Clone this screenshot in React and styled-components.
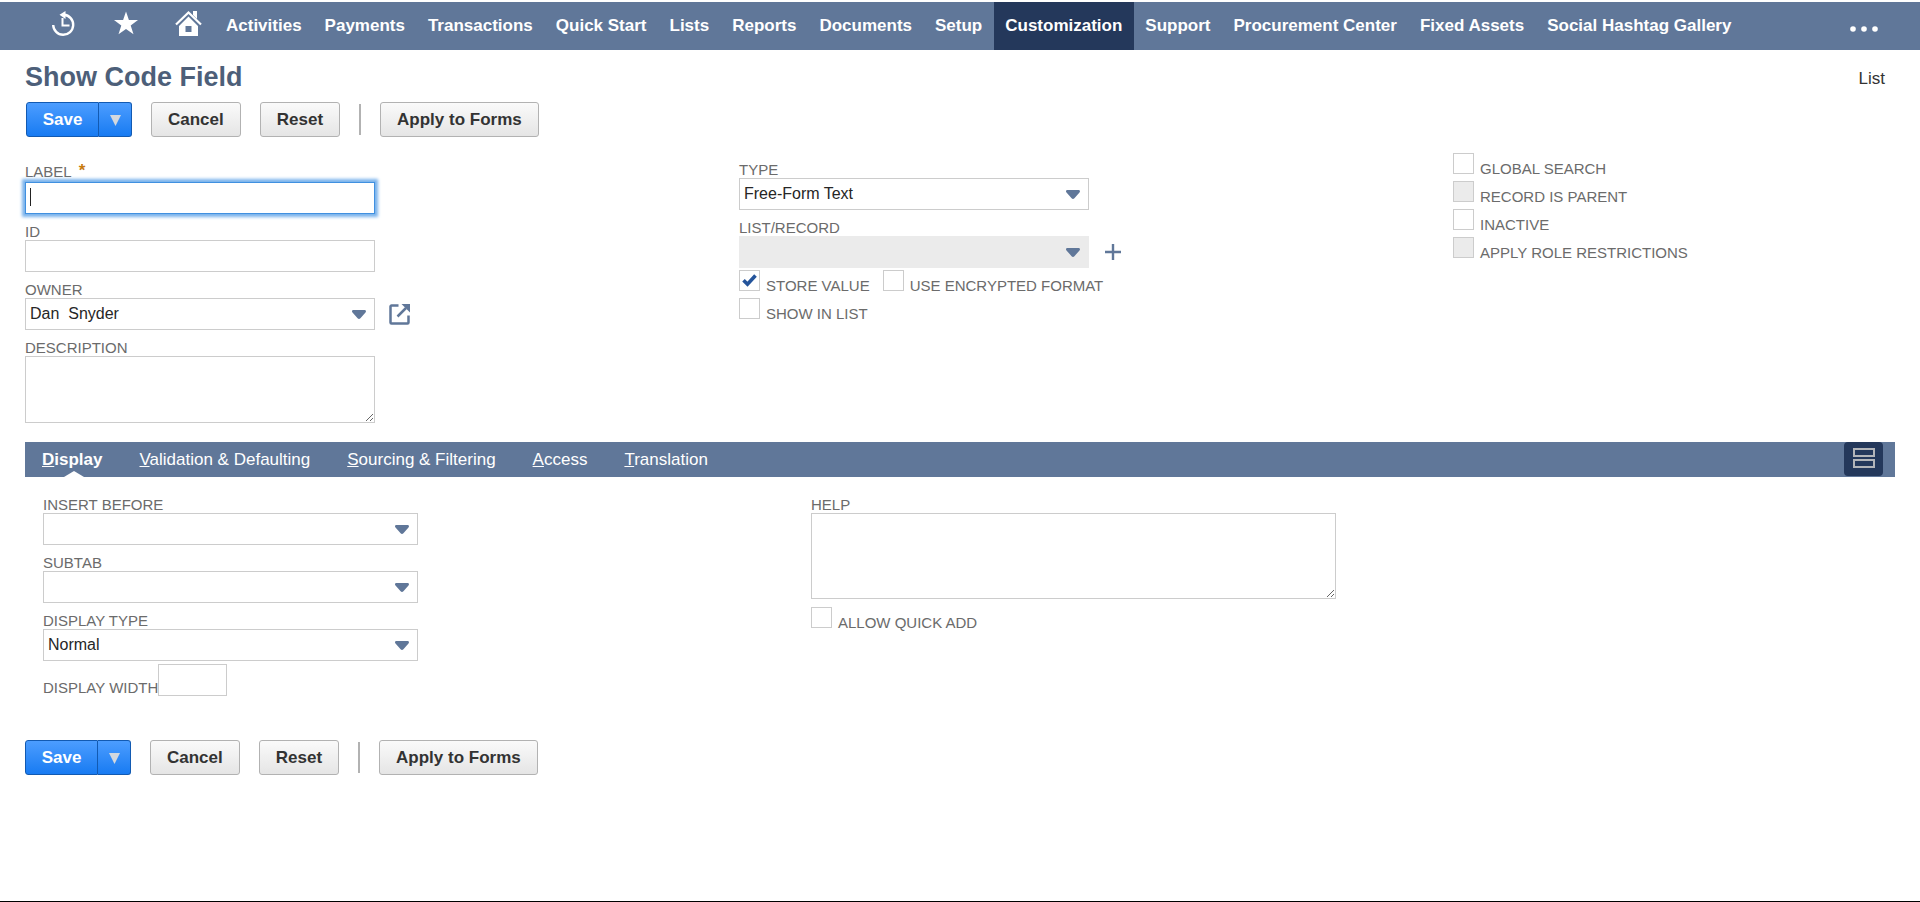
import React from 'react';
import styled, { createGlobalStyle, css } from 'styled-components';

const GlobalStyle = createGlobalStyle`
  *, *::before, *::after { box-sizing: border-box; }
  body {
    margin: 0;
    background: #fff;
    color: #262626;
    font-family: "Liberation Sans", Arial, Helvetica, sans-serif;
    font-size: 16px;
  }
  input, select, textarea, button { font-family: inherit; margin: 0; }
`;

const Page = styled.div`
  display: flex;
  flex-direction: column;
  min-height: 100vh;
  padding-top: 2px;
  border-bottom: 1px solid #000;
`;

const NavBar = styled.nav`
  display: flex;
  align-items: stretch;
  height: 48px;
  padding: 0 42px 0 37px;
  background: #607799;
`;

const NavIcons = styled.div`
  display: flex;
  gap: 8px;
`;

const NavIcon = styled.a`
  display: flex;
  justify-content: center;
  width: 54px;
  padding-top: 9px;
`;

const NavLinks = styled.div`
  display: flex;
  flex: 1;
`;

const NavLink = styled.a`
  padding: 0 12px 0 11px;
  background: ${(p) => (p.$active ? '#24385b' : 'transparent')};
  color: #fff;
  font-size: 17px;
  font-weight: bold;
  line-height: 47px;
  text-decoration: none;
  white-space: nowrap;
`;

const MoreButton = styled.button`
  padding: 5px 0 0;
  border: 0;
  background: none;
  line-height: 0;
`;

const TitleRow = styled.header`
  display: flex;
  justify-content: space-between;
  align-items: center;
  padding: 11px 35px 0 25px;
`;

const Title = styled.h1`
  margin: 0;
  color: #4d5f79;
  font-size: 27px;
  line-height: 32px;
`;

const ListLink = styled.a`
  padding-top: 4px;
  color: #333;
  font-size: 17px;
  line-height: 24px;
  text-decoration: none;
`;

const Toolbar = styled.div`
  display: flex;
  align-items: center;
  gap: 19px;
  padding: ${(p) => (p.$bottom ? '44px 25px 0' : '9px 26px 0')};
`;

const blueFace = css`
  height: 35px;
  border: 1px solid #125ab2;
  background: linear-gradient(#4c9dff, #187bf2);
  color: #fff;
`;

const Split = styled.div`
  display: flex;
`;

const SaveButton = styled.button`
  ${blueFace}
  width: 73px;
  padding: 0;
  border-radius: 3px 0 0 3px;
  font-size: 17px;
  font-weight: bold;
`;

const SaveMenuButton = styled.button`
  ${blueFace}
  display: flex;
  align-items: center;
  justify-content: center;
  width: 33px;
  padding: 2px 0 0;
  border-left: 0;
  border-radius: 0 3px 3px 0;
`;

const Button = styled.button`
  height: 35px;
  padding: 0 16px;
  border: 1px solid #b2b2b2;
  border-radius: 3px;
  background: linear-gradient(#fafafa, #e5e5e5);
  color: #333;
  font-size: 17px;
  font-weight: bold;
`;

const Separator = styled.span`
  width: 2px;
  height: 31px;
  background: #b2b2b2;
`;

const MainFields = styled.section`
  display: grid;
  grid-template-columns: 714fr 714fr 442fr;
  align-items: start;
  padding: 16px 25px 0;
`;

const Column = styled.div`
  display: flex;
  flex-direction: column;
  padding-top: ${(p) => p.$top || 0}px;
`;

const Field = styled.div`
  display: flex;
  flex-direction: column;
  margin-bottom: ${(p) => (p.$tight ? 2 : 8)}px;
`;

const FieldLabel = styled.label`
  padding-top: 2px;
  color: #6b6b6b;
  font-size: 15px;
  line-height: 16px;
`;

const LabelRow = styled.div`
  display: flex;
  gap: 7px;
  padding-bottom: 2px;
`;

const Required = styled.span`
  color: #c77b10;
  font-size: 17px;
  font-weight: bold;
  line-height: 18px;
`;

const ControlRow = styled.div`
  display: flex;
  align-items: center;
  gap: ${(p) => p.$gap || 14}px;
`;

const boxFace = css`
  border: 1px solid #ccc;
  border-radius: 0;
  background: #fff;
  color: #262626;
  font-size: 16px;
  outline: none;
`;

const TextInput = styled.input`
  ${boxFace}
  width: ${(p) => p.$width}px;
  height: 32px;
  padding: 0 5px;
  ${(p) =>
    p.$focused &&
    css`
      border-color: #4090e0;
      box-shadow: 0 0 3px 3px #7ab3ec;
      caret-color: transparent;
    `}
`;

const InputCell = styled.div`
  position: relative;
  display: flex;
`;

const Caret = styled.span`
  position: absolute;
  top: 6px;
  left: 5px;
  width: 1px;
  height: 18px;
  background: #222;
`;

const TextArea = styled.textarea`
  ${boxFace}
  display: block;
  width: ${(p) => p.$width}px;
  height: ${(p) => p.$height}px;
  padding: 4px;
  resize: both;
`;

const SelectBox = styled.div`
  display: grid;
  align-items: center;
  width: ${(p) => p.$width}px;

  > * { grid-area: 1 / 1; }
  > svg { justify-self: end; margin-right: 9px; pointer-events: none; }
`;

const Select = styled.select`
  ${boxFace}
  appearance: none;
  width: 100%;
  height: 32px;
  padding: 0 24px 2px 4px;
  opacity: 1;

  &:disabled {
    border-color: #ebebeb;
    background: #ebebeb;
  }
`;

const IconButton = styled.button`
  padding: 0;
  border: 0;
  background: none;
  line-height: 0;
`;

const CheckRow = styled.div`
  display: flex;
  gap: 13px;
`;

const Check = styled.label`
  display: flex;
  align-items: flex-start;
  gap: 6px;
  height: 28px;
  color: #6b6b6b;
  font-size: 15px;
  line-height: 18px;
`;

const CheckText = styled.span`
  padding-top: 7px;
`;

const CheckBox = styled.span`
  display: grid;
  place-items: center;
  width: 21px;
  height: 21px;

  > * { grid-area: 1 / 1; }
  > svg { pointer-events: none; }
`;

const CheckInput = styled.input`
  appearance: none;
  width: 21px;
  height: 21px;
  margin: 0;
  border: 1px solid #ccc;
  background: #fff;

  &:disabled { background: #ebebeb; }
`;

const TabBar = styled.div`
  display: flex;
  height: 35px;
  margin: 11px 25px 0;
  padding: 0 12px 0 0;
  background: #607799;
`;

const TabList = styled.div`
  display: flex;
  flex: 1;
`;

const Tab = styled.button`
  position: relative;
  padding: 0 20px 0 17px;
  border: 0;
  background: none;
  color: #fff;
  font-size: 17px;
  font-weight: ${(p) => (p.$active ? 'bold' : 'normal')};
  line-height: 35px;

  ${(p) =>
    p.$active &&
    css`
      &::after {
        content: '';
        position: absolute;
        bottom: 0;
        left: 50%;
        margin-left: -10px;
        border: solid transparent;
        border-width: 0 10px 6px;
        border-bottom-color: #fff;
      }
    `}
`;

const LayoutToggle = styled.button`
  display: flex;
  align-items: center;
  justify-content: center;
  width: 39px;
  height: 34px;
  padding: 0 0 2px;
  border: 0;
  border-radius: 4px;
  background: #24385b;
`;

const TabPanel = styled.section`
  display: grid;
  grid-template-columns: 768fr 1084fr;
  align-items: start;
  padding: 18px 25px 0 43px;
`;

const WidthRow = styled.div`
  display: flex;
  align-items: flex-end;
  margin-top: -5px;
`;

const Arrow = () => (
  <svg width="14" height="9" viewBox="0 0 14 9" aria-hidden="true">
    <path d="M1.5 0h11c1.4 0 2 1.4 1 2.4L8.4 8.2c-.8 1-2 1-2.8 0L.5 2.4C-.5 1.4 0 0 1.5 0z" fill="#607799" />
  </svg>
);

const HistoryIcon = () => (
  <svg width="26" height="26" viewBox="0 0 26 26" fill="none" stroke="#fff" aria-hidden="true">
    <path d="M13 3.800A10 10 0 1 1 2.200 14" strokeWidth="2.400" />
    <path d="M8.500 3.800L14.500 0v8z" fill="#fff" stroke="none" />
    <path d="M11.500 7v7.500h7" strokeWidth="2" />
  </svg>
);

const StarIcon = () => (
  <svg width="24" height="24" viewBox="0 0 24 24" aria-hidden="true">
    <path d="M12 .5l2.9 8.6H24l-7.300 5.400 2.800 8.800L12 18l-7.500 5.300 2.800-8.800L0 9.100h9.100z" fill="#fff" />
  </svg>
);

const HomeIcon = () => (
  <svg width="27" height="25" viewBox="0 0 27 25" aria-hidden="true">
    <path d="M1 13.500L13.500 1.500 26 13.500" fill="none" stroke="#fff" strokeWidth="2.200" />
    <path d="M18 0h4v8l-4-4z" fill="#fff" />
    <path fillRule="evenodd" d="M13.500 5.500L4 15v10h19V15zM10.500 15h6v6h-6z" fill="#fff" />
  </svg>
);

const Dots = () => (
  <svg width="28" height="6" viewBox="0 0 28 6" fill="#fff" aria-hidden="true">
    <circle cx="3" cy="3" r="2.800" />
    <circle cx="14" cy="3" r="2.800" />
    <circle cx="25" cy="3" r="2.800" />
  </svg>
);

const OpenIcon = () => (
  <svg width="21" height="21" viewBox="0 0 21 21" fill="none" stroke="#607799" aria-hidden="true">
    <path d="M9.500 1.500h-7a1 1 0 0 0-1 1v16a1 1 0 0 0 1 1h16a1 1 0 0 0 1-1v-7" strokeWidth="2.500" />
    <path d="M8.500 12.500L17 4" strokeWidth="2.500" />
    <path d="M12.500 0H21v8.500z" fill="#607799" stroke="none" />
  </svg>
);

const PlusIcon = () => (
  <svg width="16" height="16" viewBox="0 0 16 16" aria-hidden="true">
    <path d="M8 0v16M0 8h16" stroke="#607799" strokeWidth="2.400" />
  </svg>
);

const TickIcon = () => (
  <svg width="15" height="13" viewBox="0 0 15 13" aria-hidden="true">
    <path d="M1.500 6.200l4 4L13.500 1.500" fill="none" stroke="#24549b" strokeWidth="3.600" />
  </svg>
);

const StackIcon = () => (
  <svg width="22" height="20" viewBox="0 0 22 20" fill="none" stroke="#b3b5b9" strokeWidth="2" aria-hidden="true">
    <rect x="1" y="1" width="20" height="7" />
    <rect x="1" y="12" width="20" height="7" />
  </svg>
);

const NAV = [
  'Activities', 'Payments', 'Transactions', 'Quick Start', 'Lists', 'Reports', 'Documents',
  'Setup', 'Customization', 'Support', 'Procurement Center', 'Fixed Assets', 'Social Hashtag Gallery',
];

const TABS = ['Display', 'Validation & Defaulting', 'Sourcing & Filtering', 'Access', 'Translation'];

function Actions({ bottom }) {
  return (
    <Toolbar $bottom={bottom}>
      <Split>
        <SaveButton type="button">Save</SaveButton>
        <SaveMenuButton type="button" aria-label="More save options">
          <svg width="11" height="11" viewBox="0 0 11 11" aria-hidden="true">
            <path d="M0 0h11L5.500 11z" fill="#d3d8de" />
          </svg>
        </SaveMenuButton>
      </Split>
      <Button type="button">Cancel</Button>
      <Button type="button">Reset</Button>
      <Separator />
      <Button type="button">Apply to Forms</Button>
    </Toolbar>
  );
}

function SelectField({ id, label, value = '', width, disabled, tight, children }) {
  return (
    <Field $tight={tight}>
      <FieldLabel htmlFor={id}>{label}</FieldLabel>
      <ControlRow $gap={disabled ? 16 : 14}>
        <SelectBox $width={width}>
          <Select id={id} disabled={disabled} defaultValue={value}>
            <option value={value}>{value}</option>
          </Select>
          <Arrow />
        </SelectBox>
        {children}
      </ControlRow>
    </Field>
  );
}

function Checkbox({ label, checked, disabled }) {
  const [on, setOn] = React.useState(Boolean(checked));
  return (
    <Check>
      <CheckBox>
        <CheckInput type="checkbox" checked={on} disabled={disabled} onChange={() => setOn(!on)} />
        {on && <TickIcon />}
      </CheckBox>
      <CheckText>{label}</CheckText>
    </Check>
  );
}

export default function App() {
  return (
    <Page>
      <GlobalStyle />
      <NavBar>
        <NavIcons>
          <NavIcon href="#recent" aria-label="Recent records"><HistoryIcon /></NavIcon>
          <NavIcon href="#shortcuts" aria-label="Shortcuts"><StarIcon /></NavIcon>
          <NavIcon href="#home" aria-label="Home"><HomeIcon /></NavIcon>
        </NavIcons>
        <NavLinks>
          {NAV.map((name) => (
            <NavLink key={name} href="#menu" $active={name === 'Customization'}>{name}</NavLink>
          ))}
        </NavLinks>
        <MoreButton type="button" aria-label="More"><Dots /></MoreButton>
      </NavBar>

      <TitleRow>
        <Title>Show Code Field</Title>
        <ListLink href="#list">List</ListLink>
      </TitleRow>
      <Actions />

      <MainFields>
        <Column $top={9}>
          <Field>
            <LabelRow>
              <FieldLabel htmlFor="label">LABEL</FieldLabel>
              <Required>*</Required>
            </LabelRow>
            <InputCell>
              <TextInput id="label" type="text" $width={350} $focused />
              <Caret />
            </InputCell>
          </Field>
          <Field>
            <FieldLabel htmlFor="id">ID</FieldLabel>
            <TextInput id="id" type="text" $width={350} />
          </Field>
          <SelectField id="owner" label="OWNER" value={'Dan\u00a0 Snyder'} width={350}>
            <IconButton type="button" aria-label="Open owner"><OpenIcon /></IconButton>
          </SelectField>
          <Field>
            <FieldLabel htmlFor="description">DESCRIPTION</FieldLabel>
            <TextArea id="description" $width={350} $height={67} />
          </Field>
        </Column>

        <Column $top={7}>
          <SelectField id="type" label="TYPE" value="Free-Form Text" width={350} />
          <SelectField id="list" label="LIST/RECORD" width={350} disabled tight>
            <IconButton type="button" aria-label="New list"><PlusIcon /></IconButton>
          </SelectField>
          <CheckRow>
            <Checkbox label="STORE VALUE" checked />
            <Checkbox label="USE ENCRYPTED FORMAT" />
          </CheckRow>
          <Checkbox label="SHOW IN LIST" />
        </Column>

        <Column>
          <Checkbox label="GLOBAL SEARCH" />
          <Checkbox label="RECORD IS PARENT" disabled />
          <Checkbox label="INACTIVE" />
          <Checkbox label="APPLY ROLE RESTRICTIONS" disabled />
        </Column>
      </MainFields>

      <TabBar>
        <TabList>
          {TABS.map((name, i) => (
            <Tab key={name} type="button" $active={i === 0}>
              <u>{name[0]}</u>{name.slice(1)}
            </Tab>
          ))}
        </TabList>
        <LayoutToggle type="button" aria-label="Toggle layout"><StackIcon /></LayoutToggle>
      </TabBar>

      <TabPanel>
        <Column>
          <SelectField id="insert-before" label="INSERT BEFORE" width={375} />
          <SelectField id="subtab" label="SUBTAB" width={375} />
          <SelectField id="display-type" label="DISPLAY TYPE" value="Normal" width={375} />
          <WidthRow>
            <FieldLabel htmlFor="display-width">DISPLAY WIDTH</FieldLabel>
            <TextInput id="display-width" type="text" $width={69} />
          </WidthRow>
        </Column>
        <Column>
          <Field>
            <FieldLabel htmlFor="help">HELP</FieldLabel>
            <TextArea id="help" $width={525} $height={86} />
          </Field>
          <Checkbox label="ALLOW QUICK ADD" />
        </Column>
      </TabPanel>

      <Actions bottom />
    </Page>
  );
}
